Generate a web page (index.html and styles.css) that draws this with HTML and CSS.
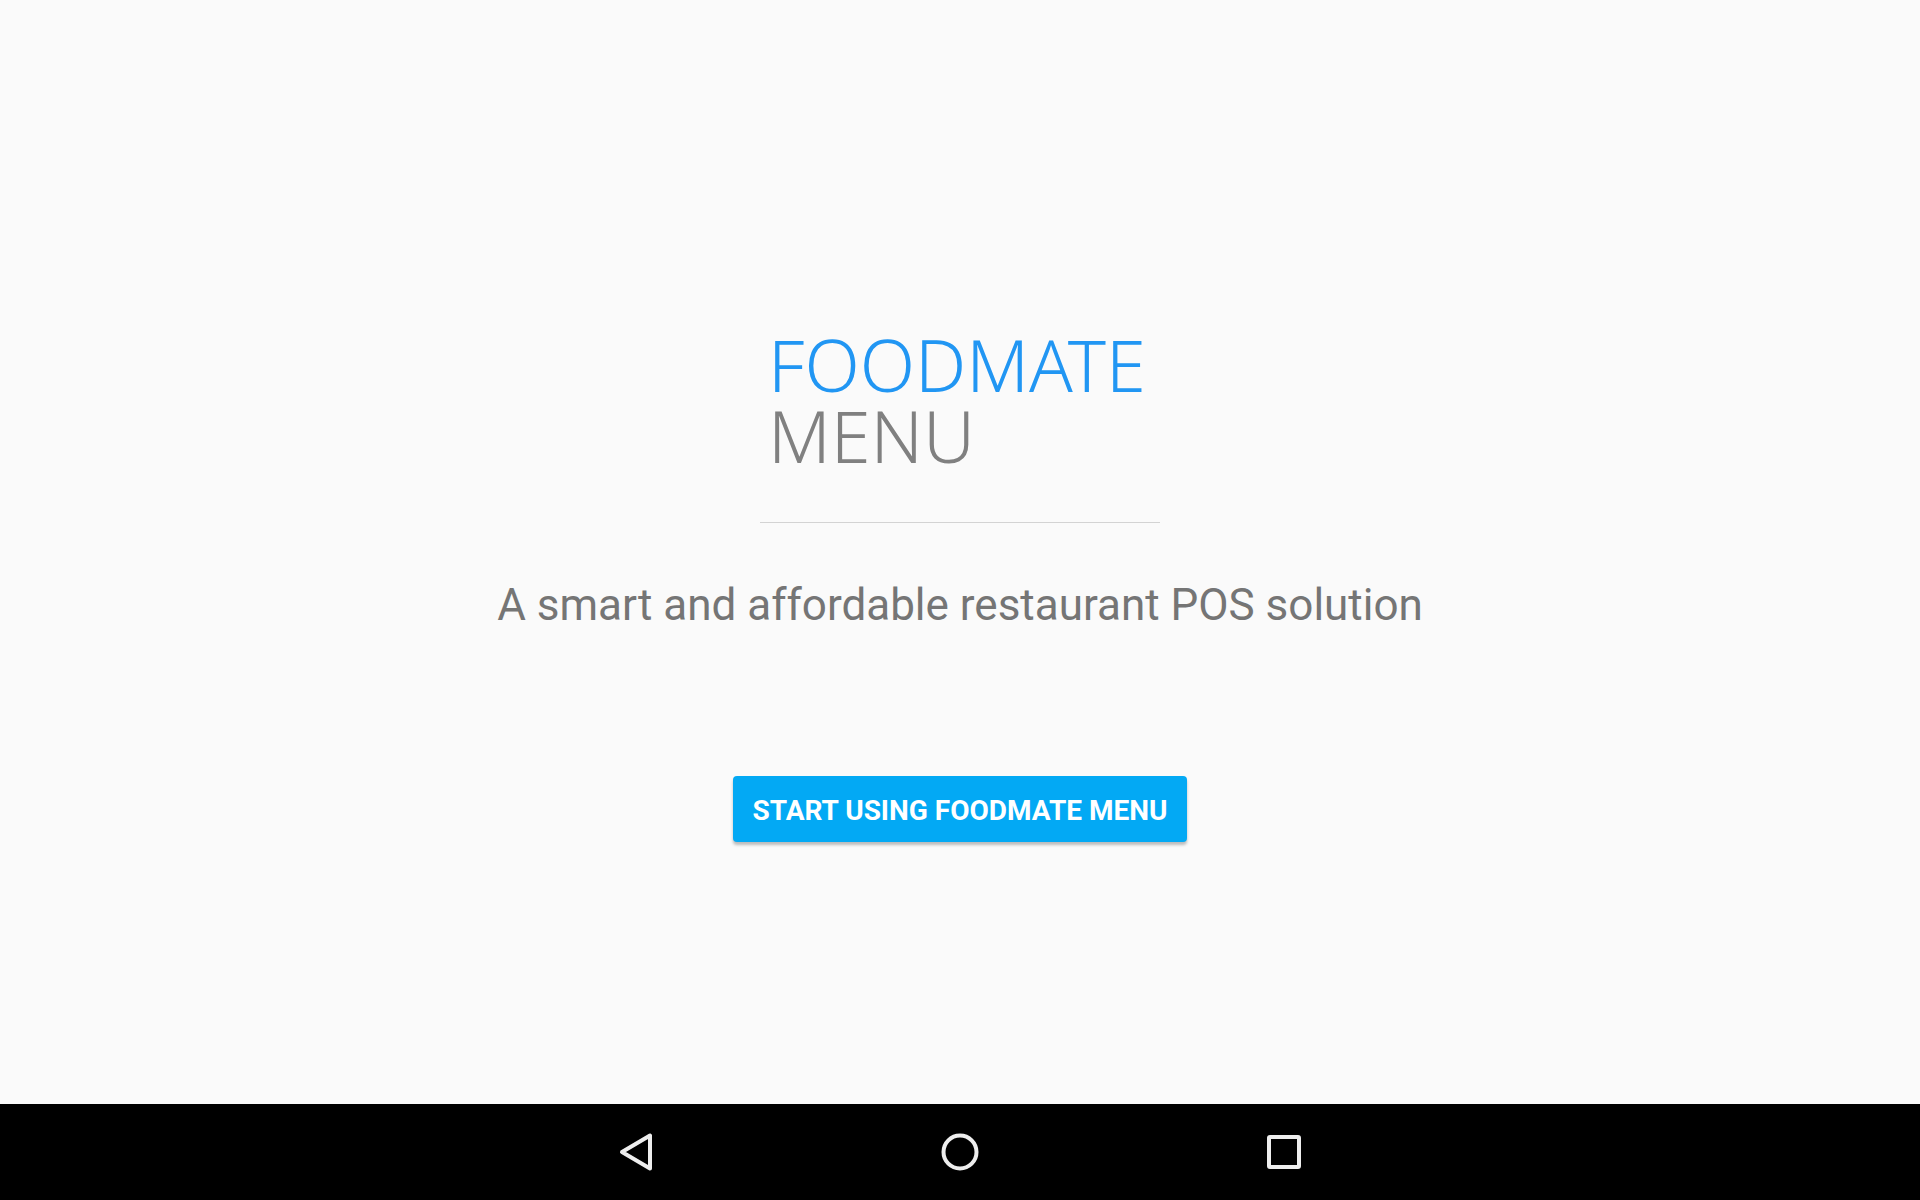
FILE: index.html
```html
<!DOCTYPE html>
<html lang="en">
<head>
  <meta charset="UTF-8" />
  <meta name="viewport" content="width=device-width, initial-scale=1.0"/>
  <title>Foodmate Menu</title>
  <link rel="stylesheet" href="styles.css">
</head>
<body>

  <main class="welcome">
    <h1 class="logo">
      <span class="logo-name">FOODMATE</span>
      <span class="logo-product">MENU</span>
    </h1>
    <p class="tagline">A smart and affordable restaurant POS solution</p>
    <button type="button" class="start-button">START USING FOODMATE MENU</button>
  </main>

  <nav class="navbar">
    <button type="button" class="nav-button" aria-label="Back">
      <svg width="48" height="48" viewBox="0 0 48 48">
        <path d="M38 7.500v33L10 24z" />
      </svg>
    </button>
    <button type="button" class="nav-button" aria-label="Home">
      <svg width="48" height="48" viewBox="0 0 48 48">
        <circle cx="24" cy="24" r="16.500" />
      </svg>
    </button>
    <button type="button" class="nav-button" aria-label="Recent apps">
      <svg width="48" height="48" viewBox="0 0 48 48">
        <rect x="9" y="9" width="30" height="30" rx="1" />
      </svg>
    </button>
  </nav>

</body>
</html>
```
FILE: styles.css
```css
body {
  font-family: Roboto, sans-serif;
  margin: 0;
  min-height: 100vh;
  display: flex;
  flex-direction: column;
  background-color: #fafafa;
  color: #757575;
}

.welcome {
  flex: 1;
  display: flex;
  flex-direction: column;
  align-items: center;
  justify-content: center;
}

.logo {
  box-sizing: border-box;
  width: 400px;
  max-width: 100%;
  margin: 0;
  padding: 67px 0 51px 8px;
  border-bottom: 1px solid #d3d3d3;
  font-family: "Noto Sans", sans-serif;
  font-size: 72px;
  font-weight: 300;
  line-height: 71px;
}

.logo span {
  display: block;
}

.logo-name {
  color: #2196f3;
}

.logo-product {
  color: #808080;
}

.tagline {
  margin: 56px 0 145px;
  font-size: 44px;
  line-height: 52px;
  text-align: center;
}

.start-button {
  padding: 18px 20px 14px;
  border: none;
  border-radius: 4px;
  background-color: #03a9f4;
  color: #fff;
  font-family: inherit;
  font-size: 28px;
  font-weight: bold;
  line-height: 34px;
  box-shadow: 0 3px 3px rgba(0, 0, 0, 0.25);
  cursor: pointer;
}

.navbar {
  display: flex;
  justify-content: center;
  gap: 276px;
  height: 96px;
  background-color: #000;
}

.nav-button {
  display: flex;
  align-items: center;
  padding: 0;
  border: none;
  background: none;
  cursor: pointer;
}

.nav-button svg {
  fill: none;
  stroke: #eee;
  stroke-width: 4;
  stroke-linejoin: round;
}
```
